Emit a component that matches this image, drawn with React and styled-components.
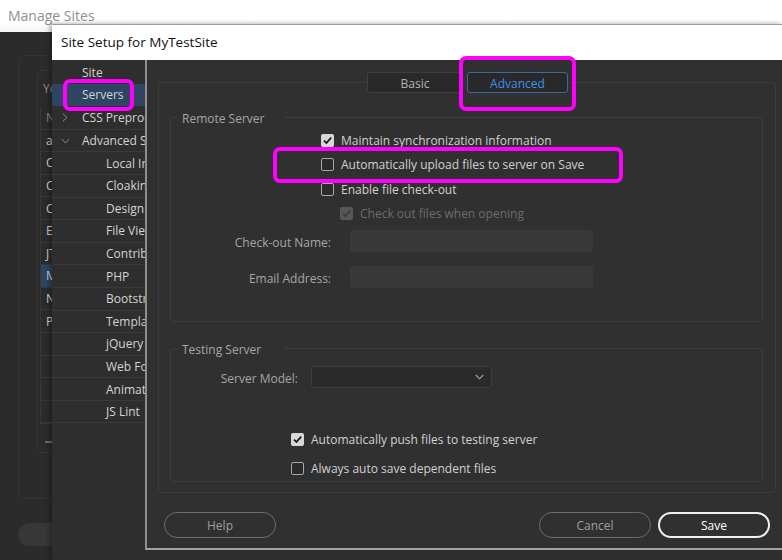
import React from 'react';
import styled, { createGlobalStyle, css } from 'styled-components';

const GlobalStyle = createGlobalStyle`
  html, body { margin: 0; padding: 0; background: #2b2b2b; }
  body { font-family: "Open Sans", "Noto Sans", sans-serif; }
  *, *::before, *::after { box-sizing: border-box; }
`;

const Desktop = styled.div`
  position: relative;
  width: 782px;
  height: 560px;
  overflow: hidden;
  background: #2b2b2b;
`;

/* ---------- Manage Sites (background window) ---------- */
const MSWindow = styled.div`
  display: flex;
  flex-direction: column;
  height: 100%;
`;
const MSTitleBar = styled.div`
  height: 32px;
  flex: none;
  display: flex;
  align-items: center;
  padding: 0 0 2px 8px;
  background: linear-gradient(#ffffff, #ffffff 70%, #f3f3f3);
  color: #8f8f8f;
  font-size: 14px;
`;
const MSBody = styled.div`
  flex: 1;
  padding: 23px 0 0 18px;
`;
const MSOuterPanel = styled.div`
  width: 640px;
  height: 444px;
  border: 1px solid #343434;
  border-radius: 6px;
  padding: 14px 0 0 18px;
`;
const MSInnerPanel = styled.div`
  width: 600px;
  height: 383px;
  border: 1px solid #353535;
  border-radius: 5px;
  padding: 0 0 0 2px;
`;
const MSLabel = styled.div`
  height: 22px;
  margin-top: 6px;
  padding-left: 3px;
  display: flex;
  align-items: center;
  color: #8a8a8a;
  font-size: 12px;
`;
const MSList = styled.div`
  margin-top: 8px;
  width: 560px;
  border: 1px solid #383838;
  border-top: none;
`;
const MSRow = styled.div`
  height: 22.6px;
  display: flex;
  align-items: center;
  padding-left: 5px;
  border-bottom: 1px solid #383838;
  font-size: 12px;
  color: ${p => (p.$header ? '#8a8a8a' : '#cfcfcf')};
  background: ${p => (p.$selected ? '#2d4560' : 'transparent')};
`;
const MSMinus = styled.div`
  margin: 17px 0 0 5px;
  width: 9px;
  height: 2px;
  background: #6a6a6a;
`;
const MSPill = styled.div`
  margin-top: 24px;
  width: 220px;
  height: 23px;
  border-radius: 12px;
  background: #373737;
`;

/* ---------- Site Setup dialog ---------- */
const Dialog = styled.div`
  position: absolute;
  left: 52px;
  top: 24px;
  right: 0;
  bottom: 0;
  display: flex;
  flex-direction: column;
  border-top: 1px solid #9c9c9c;
  box-shadow: -2px 0 5px rgba(0, 0, 0, 0.35);
`;
const DialogTitle = styled.div`
  height: 35px;
  flex: none;
  display: flex;
  align-items: center;
  padding: 0 0 1px 9px;
  background: #ffffff;
  color: #111111;
  font-size: 13.5px;
`;
const DialogBody = styled.div`
  flex: 1;
  display: flex;
  min-height: 0;
  background: #2e2e2e;
`;

const Sidebar = styled.div`
  width: 93px;
  flex: none;
  overflow: hidden;
  padding-top: 1px;
`;
const NavRow = styled.div`
  position: relative;
  height: 22.6px;
  display: flex;
  align-items: center;
  white-space: nowrap;
  padding-left: ${p => (p.$level === 2 ? 54 : 30)}px;
  font-size: 12px;
  color: #d4d4d4;
  background: ${p => (p.$selected ? '#2d4560' : 'transparent')};
  border-top: ${p => (p.$divider ? '1px solid #3a3a3a' : 'none')};
  border-bottom: ${p => (p.$last ? '1px solid #3a3a3a' : 'none')};
`;
const NavText = styled.span`
  flex: none;
`;
const ChevronSlot = styled.span`
  flex: none;
  width: 26px;
  margin-left: -26px;
  display: flex;
  align-items: center;
  padding-left: ${p => (p.$down ? 5 : 6)}px;
`;

const Highlight = styled.span`
  position: absolute;
  z-index: 3;
  border: 4px solid #ff00ff;
  border-radius: 7px;
  pointer-events: none;
  left: ${p => p.$l}px;
  top: ${p => p.$t}px;
  width: ${p => p.$w}px;
  height: ${p => p.$h}px;
`;

const Content = styled.div`
  flex: 1;
  display: flex;
  flex-direction: column;
  margin-bottom: 10px;
  border-left: 2px solid #8e8e8e;
  border-bottom: 2px solid #a2a2a2;
  background: #303030;
`;
const TabPane = styled.div`
  margin: 22px 6px 0 11px;
  height: 411px;
  border: 1px solid #3b3b3b;
  border-radius: 4px;
  padding: 0 12px 0 11px;
`;
const TabStrip = styled.div`
  margin-top: -11px;
  height: 21px;
  display: flex;
  justify-content: center;
  gap: 4px;
  padding-left: 2px;
`;
const Tab = styled.div`
  position: relative;
  width: ${p => p.$w}px;
  height: 21px;
  display: flex;
  align-items: center;
  justify-content: center;
  padding-top: 2px;
  border-radius: 3px;
  font-size: 12px;
  background: #292929;
  border: 1px solid ${p => (p.$active ? '#3a6aa6' : '#3e3e3e')};
  color: ${p => (p.$active ? '#3d90ea' : '#b3b3b3')};
`;

const Group = styled.fieldset`
  margin: ${p => p.$mt}px 0 0;
  padding: 0 0 ${p => p.$pb}px;
  min-width: 0;
  border: 1px solid #3d3d3d;
  border-radius: 4px;
`;
const Legend = styled.legend`
  margin-left: 7px;
  padding: 2px 0 0 4px;
  width: 107px;
  height: 18px;
  line-height: 18px;
  font-size: 12px;
  color: #a6a6a6;
`;

const CheckList = styled.div`
  margin-top: ${p => p.$mt}px;
  padding-left: ${p => p.$pl}px;
  display: flex;
  flex-direction: column;
  gap: ${p => p.$gap}px;
`;
const CheckRow = styled.div`
  position: relative;
  height: ${p => p.$h}px;
  display: flex;
  align-items: center;
  gap: 7px;
  margin-left: ${p => (p.$indent ? 19 : 0)}px;
  font-size: 12px;
  white-space: nowrap;
  color: ${p => (p.$disabled ? '#6c6c6c' : '#d0d0d0')};
`;
const Box = styled.span`
  width: 13px;
  height: 13px;
  flex: none;
  border-radius: 2px;
  display: flex;
  align-items: center;
  justify-content: center;
  ${p =>
    p.$checked
      ? css`
          background: ${p.$disabled ? '#585858' : '#d8d8d8'};
        `
      : css`
          border: 1px solid #a8a8a8;
          background: #2b2b2b;
        `}
`;

const FormGrid = styled.div`
  margin-top: ${p => p.$mt}px;
  display: grid;
  grid-template-columns: ${p => p.$label}px ${p => p.$field}px;
  column-gap: ${p => p.$gap}px;
  row-gap: 14px;
  align-items: center;
`;
const FieldLabel = styled.label`
  text-align: right;
  font-size: 12px;
  color: #a6a6a6;
  white-space: nowrap;
  padding-top: 2px;
`;
const TextInput = styled.div`
  height: 22px;
  border-radius: 2px;
  background: #393939;
`;
const Select = styled.div`
  height: 22px;
  border: 1px solid #3d3d3d;
  border-radius: 3px;
  background: #2a2a2a;
  display: flex;
  align-items: center;
  justify-content: flex-end;
  padding-right: 7px;
`;

const Footer = styled.div`
  margin-top: 19px;
  height: 26px;
  display: flex;
  align-items: center;
  gap: 7px;
  padding: 0 12px 0 17px;
`;
const Spacer = styled.div`
  flex: 1;
`;
const Button = styled.button`
  width: 112px;
  height: 26px;
  border-radius: 13px;
  background: transparent;
  font-family: "Open Sans", "Noto Sans", sans-serif;
  font-size: 12px;
  padding: 1px 0 0;
  border: ${p => (p.$primary ? '2px solid #f0f0f0' : '1px solid #6c6c6c')};
  color: ${p => (p.$primary ? '#ffffff' : '#9e9e9e')};
`;

/* ---------- icons ---------- */
const CheckMark = ({ color }) => (
  <svg width="11" height="11" viewBox="0 0 11 11">
    <path d="M2 5.6 L4.4 8 L9.2 2.6" fill="none" stroke={color} strokeWidth="1.8" />
  </svg>
);
const ChevronRight = () => (
  <svg width="6" height="9" viewBox="0 0 6 9">
    <path d="M1 0.8 L5 4.5 L1 8.2" fill="none" stroke="#8a8a8a" strokeWidth="1" />
  </svg>
);
const ChevronDown = () => (
  <svg width="9" height="6" viewBox="0 0 9 6">
    <path d="M0.8 1 L4.5 5 L8.2 1" fill="none" stroke="#8a8a8a" strokeWidth="1" />
  </svg>
);
const SelectChevron = () => (
  <svg width="9" height="6" viewBox="0 0 9 6">
    <path d="M0.8 1 L4.5 4.8 L8.2 1" fill="none" stroke="#a8a8a8" strokeWidth="1.1" />
  </svg>
);

const Checkbox = ({ checked, disabled, indent, height, children, highlight }) => (
  <CheckRow $disabled={disabled} $indent={indent} $h={height}>
    <Box $checked={checked} $disabled={disabled}>
      {checked && <CheckMark color={disabled ? '#3a3a3a' : '#1c1c1c'} />}
    </Box>
    <span>{children}</span>
    {highlight && <Highlight $l={-48} $t={-5.5} $w={350} $h={36} />}
  </CheckRow>
);

const sites = ['adobe-test', 'Client A', 'Client B', 'Company', 'Events', 'JTest', 'MyTestSite', 'News', 'Portfolio', '', '', '', ''];

const navItems = [
  { label: 'Site', level: 1 },
  { label: 'Servers', level: 1, selected: true, highlight: true },
  { label: 'CSS Preprocessors', level: 1, chevron: 'right' },
  { label: 'Advanced Settings', level: 1, chevron: 'down', divider: true },
  { label: 'Local Info', level: 2, divider: true },
  { label: 'Cloaking', level: 2, divider: true },
  { label: 'Design Notes', level: 2, divider: true },
  { label: 'File View Columns', level: 2, divider: true },
  { label: 'Contribute', level: 2, divider: true },
  { label: 'PHP', level: 2, divider: true },
  { label: 'Bootstrap', level: 2, divider: true },
  { label: 'Templates', level: 2, divider: true },
  { label: 'jQuery', level: 2, divider: true },
  { label: 'Web Fonts', level: 2, divider: true },
  { label: 'Animation Assets', level: 2, divider: true },
  { label: 'JS Lint', level: 2, divider: true, last: true },
];

export default function App() {
  return (
    <>
      <GlobalStyle />
      <Desktop>
        <MSWindow>
          <MSTitleBar>Manage Sites</MSTitleBar>
          <MSBody>
            <MSOuterPanel>
              <MSInnerPanel>
                <MSLabel>Your Sites</MSLabel>
                <MSList>
                  <MSRow $header>Name</MSRow>
                  {sites.map((s, i) => (
                    <MSRow key={i} $selected={s === 'MyTestSite'}>{s}</MSRow>
                  ))}
                </MSList>
                <MSMinus />
              </MSInnerPanel>
            </MSOuterPanel>
            <MSPill />
          </MSBody>
        </MSWindow>

        <Dialog>
          <DialogTitle>Site Setup for MyTestSite</DialogTitle>
          <DialogBody>
            <Sidebar>
              {navItems.map(item => (
                <NavRow
                  key={item.label}
                  $level={item.level}
                  $selected={item.selected}
                  $divider={item.divider}
                  $last={item.last}
                >
                  {item.chevron && (
                    <ChevronSlot $down={item.chevron === 'down'}>
                      {item.chevron === 'down' ? <ChevronDown /> : <ChevronRight />}
                    </ChevronSlot>
                  )}
                  <NavText>{item.label}</NavText>
                  {item.highlight && <Highlight $l={11} $t={-5} $w={71} $h={32} />}
                </NavRow>
              ))}
            </Sidebar>

            <Content>
              <TabPane>
                <TabStrip>
                  <Tab $w={96}>Basic</Tab>
                  <Tab $w={101} $active>
                    Advanced
                    <Highlight $l={-9} $t={-17} $w={117} $h={55} />
                  </Tab>
                </TabStrip>

                <Group $mt={15} $pb={33}>
                  <Legend>Remote Server</Legend>
                  <CheckList $mt={2} $pl={150} $gap={0}>
                    <Checkbox checked height={24.5}>Maintain synchronization information</Checkbox>
                    <Checkbox height={24.5} highlight>Automatically upload files to server on Save</Checkbox>
                    <Checkbox height={24.5}>Enable file check-out</Checkbox>
                    <Checkbox checked disabled indent height={24.5}>Check out files when opening</Checkbox>
                  </CheckList>
                  <FormGrid $mt={4} $label={160} $field={243} $gap={19}>
                    <FieldLabel>Check-out Name:</FieldLabel>
                    <TextInput />
                    <FieldLabel>Email Address:</FieldLabel>
                    <TextInput />
                  </FormGrid>
                </Group>

                <Group $mt={17} $pb={1}>
                  <Legend>Testing Server</Legend>
                  <FormGrid $mt={9} $label={127} $field={181} $gap={13}>
                    <FieldLabel>Server Model:</FieldLabel>
                    <Select>
                      <SelectChevron />
                    </Select>
                  </FormGrid>
                  <CheckList $mt={40.5} $pl={120} $gap={7}>
                    <Checkbox checked height={22}>Automatically push files to testing server</Checkbox>
                    <Checkbox height={22}>Always auto save dependent files</Checkbox>
                  </CheckList>
                </Group>
              </TabPane>

              <Footer>
                <Button>Help</Button>
                <Spacer />
                <Button>Cancel</Button>
                <Button $primary>Save</Button>
              </Footer>
            </Content>
          </DialogBody>
        </Dialog>
      </Desktop>
    </>
  );
}
